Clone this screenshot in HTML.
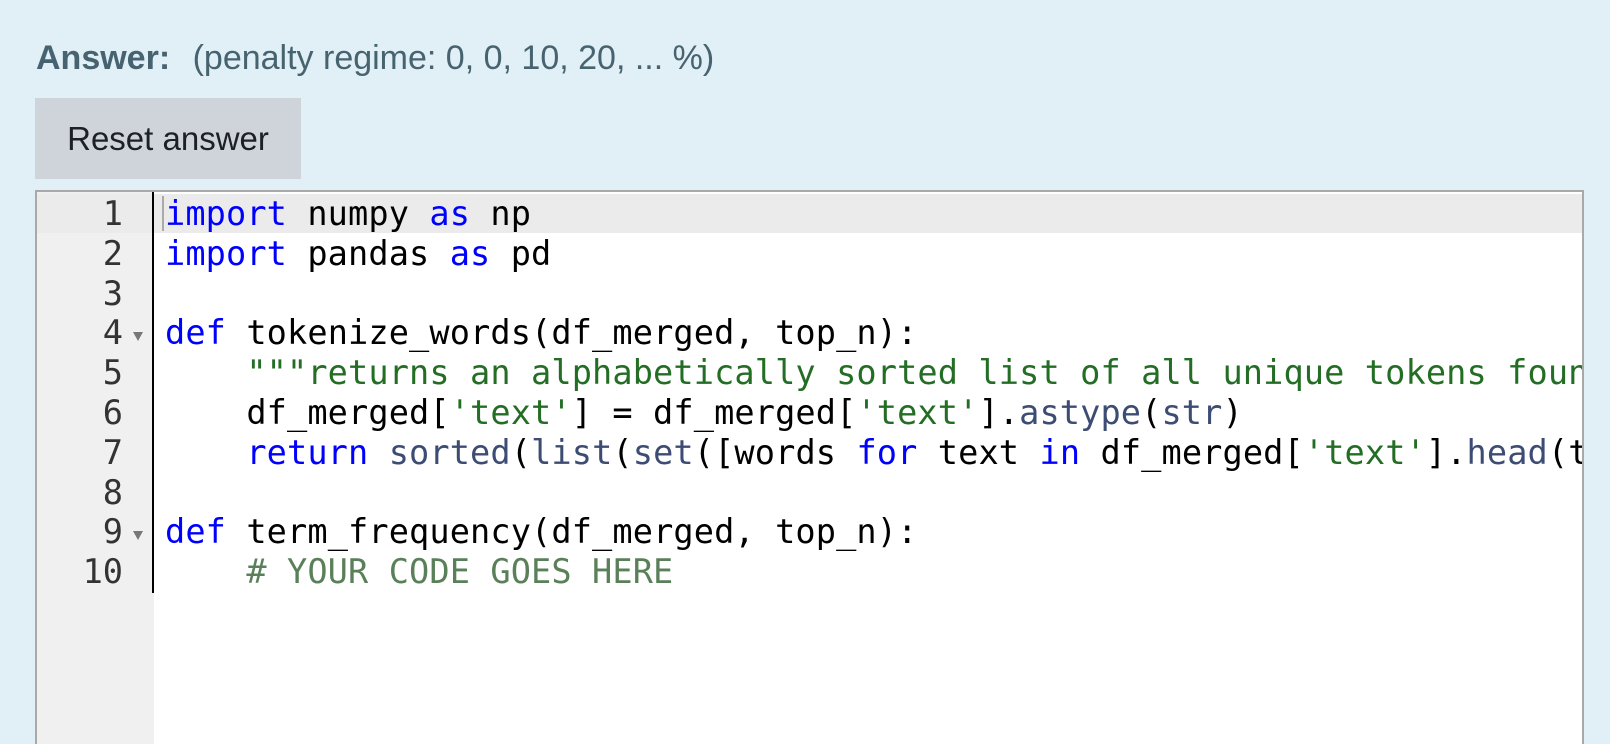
<!DOCTYPE html>
<html><head><meta charset="utf-8"><style>
html,body{margin:0;padding:0;width:1610px;height:744px;overflow:hidden;background:#e1eff7;font-family:"Liberation Sans",sans-serif;position:relative}
.ans{position:absolute;left:36px;top:39px;font-size:34px;line-height:39px;color:#46636f;white-space:nowrap}
.ans b{font-weight:bold;margin-right:13px}
.btn{position:absolute;left:35px;top:98px;width:266px;height:81px;background:#ced4da;color:#1d2125;font-size:33px;line-height:81px;text-align:center}
.ed{position:absolute;left:35px;top:190px;width:1545px;height:554px;border:2px solid #a9a9a9;border-bottom:none;background:#fff;overflow:hidden}
.gut{position:absolute;left:0;top:0;width:117px;height:100%;background:#f0f0f0}
.vl{position:absolute;left:115px;top:0;width:2px;height:401px;background:#000}
.hl{position:absolute;left:0;top:2px;width:100%;height:39px;background:#ebebeb}
.ln,.cd{position:absolute;font-family:"DejaVu Sans Mono","Liberation Mono",monospace;font-size:33.6px;line-height:39.8px;white-space:pre}
.ln{left:0;width:86px;text-align:right;color:#333}
.cd{left:128px;color:#000;letter-spacing:0.12px}
.k{color:#0000ff}.s{color:#236e24}.f{color:#3c4c72}.c{color:#5a805a}
.tri{position:absolute;left:96px;width:0;height:0;border-left:5px solid transparent;border-right:5px solid transparent;border-top:9px solid #777}
.cur{position:absolute;left:125px;top:4px;width:2px;height:35px;background:#aaa}
</style></head><body>
<div class="ans"><b>Answer:</b> (penalty regime: 0, 0, 10, 20, ... %)</div>
<div class="btn">Reset answer</div>
<div class="ed">
<div class="gut"></div>
<div class="hl"></div>
<div class="vl"></div>
<div class="cur"></div>
<div class="ln" style="top:2px">1
2
3
4
5
6
7
8
9
10</div>
<div class="tri" style="top:140px"></div>
<div class="tri" style="top:339px"></div>
<div class="cd" style="top:2px"><span class="k">import</span> numpy <span class="k">as</span> np
<span class="k">import</span> pandas <span class="k">as</span> pd

<span class="k">def</span> tokenize_words(df_merged, top_n):
    <span class="s">"""returns an alphabetically sorted list of all unique tokens found</span>
    df_merged[<span class="s">'text'</span>] = df_merged[<span class="s">'text'</span>].<span class="f">astype</span>(<span class="f">str</span>)
    <span class="k">return</span> <span class="f">sorted</span>(<span class="f">list</span>(<span class="f">set</span>([words <span class="k">for</span> text <span class="k">in</span> df_merged[<span class="s">'text'</span>].<span class="f">head</span>(top_n)

<span class="k">def</span> term_frequency(df_merged, top_n):
    <span class="c"># YOUR CODE GOES HERE</span></div>
</div>
</body></html>
